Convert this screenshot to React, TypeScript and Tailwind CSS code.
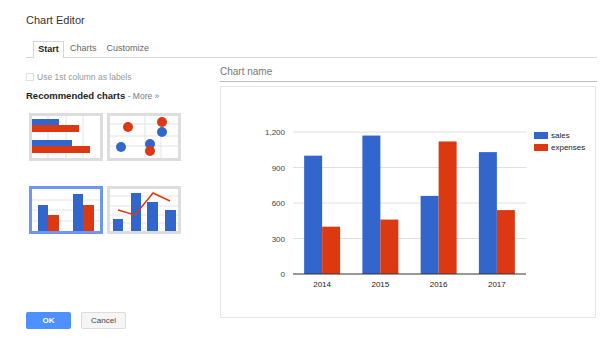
const BLUE = "#3366cc";
const RED = "#dc3912";

const data = [
  { year: "2014", sales: 1000, expenses: 400 },
  { year: "2015", sales: 1170, expenses: 460 },
  { year: "2016", sales: 660, expenses: 1120 },
  { year: "2017", sales: 1030, expenses: 540 },
];

function Thumb({ selected, children }: { selected?: boolean; children: React.ReactNode }) {
  return (
    <div
      className={
        "h-[48px] w-[74px] border-[3px] bg-white " +
        (selected ? "border-[#7096f3]" : "border-[#dddddd]")
      }
    >
      <svg width="68" height="42" viewBox="0 0 68 42">
        {children}
      </svg>
    </div>
  );
}

function BarThumb() {
  return (
    <>
      {[16, 34, 51].map((x) => (
        <line key={x} x1={x} y1={0} x2={x} y2={42} stroke="#e3e3e3" strokeWidth={1} />
      ))}
      <rect x={0} y={3} width={27} height={6} fill={BLUE} />
      <rect x={0} y={9} width={47} height={7} fill={RED} />
      <rect x={0} y={24} width={40} height={6} fill={BLUE} />
      <rect x={0} y={30} width={58} height={7} fill={RED} />
    </>
  );
}

function ScatterThumb() {
  return (
    <>
      {[8, 20, 30].map((y) => (
        <line key={y} x1={0} y1={y} x2={68} y2={y} stroke="#e3e3e3" strokeWidth={1} />
      ))}
      {[35, 51].map((x) => (
        <line key={x} x1={x} y1={0} x2={x} y2={42} stroke="#e3e3e3" strokeWidth={1} />
      ))}
      <circle cx={18} cy={11} r={5} fill={RED} />
      <circle cx={52} cy={6} r={5} fill={RED} />
      <circle cx={52} cy={16} r={5} fill={BLUE} />
      <circle cx={11} cy={31} r={5} fill={BLUE} />
      <circle cx={40} cy={28} r={5} fill={BLUE} />
      <circle cx={40} cy={35} r={5} fill={RED} />
    </>
  );
}

function ColumnThumb() {
  return (
    <>
      {[11, 21, 32].map((y) => (
        <line key={y} x1={0} y1={y} x2={68} y2={y} stroke="#e3e3e3" strokeWidth={1} />
      ))}
      <rect x={6} y={16} width={10} height={26} fill={BLUE} />
      <rect x={16} y={26} width={11} height={16} fill={RED} />
      <rect x={41} y={5} width={10} height={37} fill={BLUE} />
      <rect x={51} y={16} width={11} height={26} fill={RED} />
    </>
  );
}

function ComboThumb() {
  return (
    <>
      {[7, 17, 26, 34].map((y) => (
        <line key={y} x1={0} y1={y} x2={68} y2={y} stroke="#e3e3e3" strokeWidth={1} />
      ))}
      <rect x={3} y={30} width={10} height={12} fill={BLUE} />
      <rect x={21} y={4} width={10} height={38} fill={BLUE} />
      <rect x={37} y={13} width={11} height={29} fill={BLUE} />
      <rect x={55} y={21} width={11} height={21} fill={BLUE} />
      <polyline points="8,21 25,26 43,4 60,12" fill="none" stroke={RED} strokeWidth={1.5} />
    </>
  );
}

function ColumnChart() {
  const base = 187;
  const step = 35.5;
  const left = 72;
  const right = 305;
  const group = (right - left) / data.length;
  const h = (v: number) => (v / 300) * step;
  return (
    <svg width="376" height="232" viewBox="0 0 376 232" fontFamily="'Liberation Sans', Arial, sans-serif">
      {[1, 2, 3, 4].map((i) => (
        <line key={i} x1={left} y1={base - i * step} x2={right} y2={base - i * step} stroke="#e0e0e0" />
      ))}
      {[0, 300, 600, 900, 1200].map((v, i) => (
        <text key={v} x={64} y={base - i * step + 3} fontSize={8} fill="#444" textAnchor="end">
          {v.toLocaleString("en-US")}
        </text>
      ))}
      {data.map((d, i) => {
        const cx = left + group * i + group / 2;
        return (
          <g key={d.year}>
            <rect x={cx - 18} y={base - h(d.sales)} width={18} height={h(d.sales)} fill={BLUE} />
            <rect x={cx} y={base - h(d.expenses)} width={18} height={h(d.expenses)} fill={RED} />
            <text x={cx} y={base + 13} fontSize={8} fill="#222" textAnchor="middle">
              {d.year}
            </text>
          </g>
        );
      })}
      <line x1={left} y1={base} x2={right} y2={base} stroke="#333" strokeWidth={1} />
      <rect x={313} y={45} width={14} height={7} fill={BLUE} />
      <text x={330} y={51} fontSize={8} fill="#222">sales</text>
      <rect x={313} y={57} width={14} height={7} fill={RED} />
      <text x={330} y={63} fontSize={8} fill="#222">expenses</text>
    </svg>
  );
}

export default function App() {
  return (
    <div className="flex h-[349px] w-[601px] flex-col bg-white pb-[20px] pl-[26px] pr-[4px] font-['Liberation_Sans',Arial,sans-serif]">
      <div className="pt-[14px] text-[11px] leading-[13px] text-[#333]">Chart Editor</div>

      <div className="mt-[14px] flex h-[17px] items-end border-b border-[#d6d6d6] text-[9px]">
        <div className="-mb-px ml-[7px] flex h-[17px] w-[31px] items-center justify-center border border-b-0 border-[#d6d6d6] bg-white font-bold text-[#222]">
          Start
        </div>
        <div className="ml-[6px] flex h-[16px] items-center text-[#666]">Charts</div>
        <div className="ml-[10px] flex h-[16px] items-center text-[#666]">Customize</div>
      </div>

      <div className="flex flex-1">
        <div className="flex w-[194px] flex-col">
          <div className="mt-[14px] flex items-center gap-[3px]">
            <div className="h-[8px] w-[8px] border border-[#e0e0e0]" />
            <span className="text-[8.5px] leading-[10px] text-[#999]">Use 1st column as labels</span>
          </div>
          <div className="mt-[8px] text-[9.5px] leading-[11px]">
            <span className="font-bold text-[#222]">Recommended charts</span>
            <span className="text-[8.5px] text-[#777]"> - More »</span>
          </div>
          <div className="ml-[3px] mt-[11px] grid w-[152px] grid-cols-2 gap-x-[4px] gap-y-[25px]">
            <Thumb>
              <BarThumb />
            </Thumb>
            <Thumb>
              <ScatterThumb />
            </Thumb>
            <Thumb selected>
              <ColumnThumb />
            </Thumb>
            <Thumb>
              <ComboThumb />
            </Thumb>
          </div>
          <div className="mt-auto flex gap-[10px]">
            <button className="h-[17px] w-[45px] rounded-[2px] bg-[#4d90fe] text-[8px] font-bold text-white">
              OK
            </button>
            <button className="h-[17px] w-[45px] rounded-[2px] border border-[#dcdcdc] bg-[#f5f5f5] text-[8px] text-[#444]">
              Cancel
            </button>
          </div>
        </div>

        <div className="flex flex-1 flex-col">
          <div className="mt-[8px] border-b border-[#bdbdbd] pb-[3px] text-[10px] leading-[12px] text-[#777]">
            Chart name
          </div>
          <div className="mt-[4px] h-[232px] w-[376px] border border-[#e5e5e5]">
            <ColumnChart />
          </div>
        </div>
      </div>
    </div>
  );
}
